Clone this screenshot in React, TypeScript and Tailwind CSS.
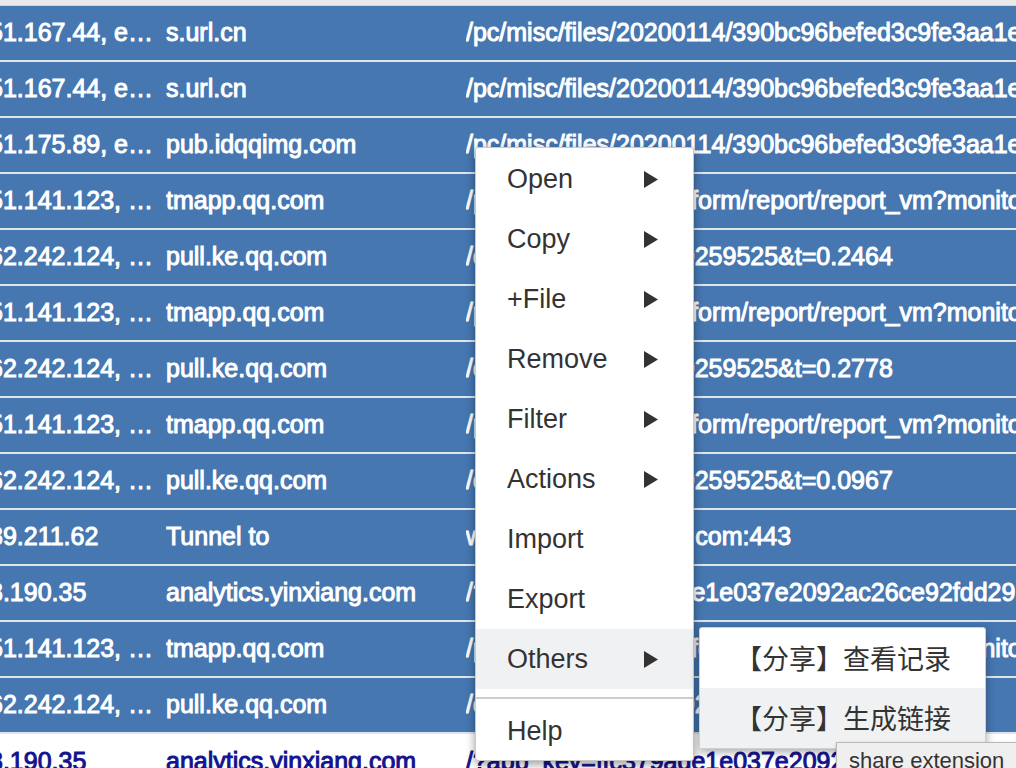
import { Fragment } from "react";

type Row = { ip: string; host: string; path: string; selected?: boolean };

const filesPath = "/pc/misc/files/20200114/390bc96befed3c9fe3aa1e7c2d84f01a.png";
const tmappPath = "/pc/misc/cgi_bin/platform/report/report_vm?monitors=%5B%5D";
const pullPath = (t: string) => `/data?ts=157900000259525&t=${t}`;
const yxPath = "/?app_key=ffc379ade1e037e2092ac26ce92fdd29b8a1";

const rows: Row[] = [
  { ip: "51.167.44, e…", host: "s.url.cn", path: filesPath, selected: true },
  { ip: "51.167.44, e…", host: "s.url.cn", path: filesPath, selected: true },
  { ip: "51.175.89, e…", host: "pub.idqqimg.com", path: filesPath, selected: true },
  { ip: "51.141.123, …", host: "tmapp.qq.com", path: tmappPath, selected: true },
  { ip: "62.242.124, …", host: "pull.ke.qq.com", path: pullPath("0.2464"), selected: true },
  { ip: "51.141.123, …", host: "tmapp.qq.com", path: tmappPath, selected: true },
  { ip: "62.242.124, …", host: "pull.ke.qq.com", path: pullPath("0.2778"), selected: true },
  { ip: "51.141.123, …", host: "tmapp.qq.com", path: tmappPath, selected: true },
  { ip: "62.242.124, …", host: "pull.ke.qq.com", path: pullPath("0.0967"), selected: true },
  { ip: "89.211.62", host: "Tunnel to", path: "wup.imtt.browser.qq.com:443", selected: true },
  { ip: "8.190.35", host: "analytics.yinxiang.com", path: yxPath, selected: true },
  { ip: "51.141.123, …", host: "tmapp.qq.com", path: tmappPath, selected: true },
  { ip: "62.242.124, …", host: "pull.ke.qq.com", path: pullPath("0.1532"), selected: true },
  { ip: "8.190.35", host: "analytics.yinxiang.com", path: yxPath },
];

const menuItems: { label: string; sub?: boolean }[] = [
  { label: "Open", sub: true },
  { label: "Copy", sub: true },
  { label: "+File", sub: true },
  { label: "Remove", sub: true },
  { label: "Filter", sub: true },
  { label: "Actions", sub: true },
  { label: "Import" },
  { label: "Export" },
  { label: "Others", sub: true },
];

function Arrow() {
  return (
    <svg width="14" height="17" viewBox="0 0 14 17" className="shrink-0">
      <path d="M0 0 L14 8.5 L0 17 Z" fill="#333" />
    </svg>
  );
}

export default function App() {
  return (
    <div className="relative h-[768px] w-[1016px] overflow-hidden bg-white font-['Liberation_Sans',Arial,sans-serif]">
      {/* list */}
      <div className="h-[6px] border-b border-[#d6d6d6] bg-[#e9e9e9]" />
      <div className="flex flex-col">
        {rows.map((r, i) => (
          <div
            key={i}
            className={
              r.selected
                ? "flex h-[56px] shrink-0 items-center border-b-2 border-[#dfe4eb] bg-[#4677b1] text-[25px] whitespace-nowrap text-white [-webkit-text-stroke:1px_#fff]"
                : "flex h-[56px] shrink-0 items-center bg-white text-[25px] whitespace-nowrap text-[#13138f] [-webkit-text-stroke:1px_#13138f]"
            }
          >
            <div className="-ml-[11px] w-[177px] shrink-0 overflow-hidden">{r.ip}</div>
            <div className="w-[300px] shrink-0 overflow-hidden">{r.host}</div>
            <div className="min-w-0 flex-1 overflow-hidden">{r.path}</div>
          </div>
        ))}
      </div>

      {/* context menu */}
      <div className="absolute top-[147px] left-[475px] w-[219px] rounded-[3px] border border-[#c9c9c9] bg-white pt-[1px] text-[27px] text-[#333] shadow-[0_3px_10px_rgba(0,0,0,0.4)]">
        {menuItems.map((m) => (
          <Fragment key={m.label}>
            <div
              className={
                m.label === "Others"
                  ? "flex h-[60px] items-center justify-between bg-[#f0f1f3] pr-[35px] pl-[31px]"
                  : "flex h-[60px] items-center justify-between pr-[35px] pl-[31px]"
              }
            >
              <span>{m.label}</span>
              {m.sub && <Arrow />}
            </div>
          </Fragment>
        ))}
        <div className="mt-[8px] h-[2px] bg-[#cdcdcd]" />
        <div className="flex h-[61px] items-center pt-[3px] pl-[31px]">Help</div>
      </div>

      {/* sub menu */}
      <div className="absolute top-[627px] left-[699px] w-[287px] rounded-[3px] border border-[#d0d0d0] bg-white text-[27px] text-[#333] shadow-[0_3px_10px_rgba(0,0,0,0.35)] font-['Noto_Sans_CJK_SC',sans-serif]">
        <div className="flex h-[60px] items-center pl-[35px]">【分享】查看记录</div>
        <div className="flex h-[60px] items-center bg-[#f0f1f3] pl-[35px]">【分享】生成链接</div>
      </div>

      {/* tooltip */}
      <div className="absolute top-[742px] left-[836px] w-[200px] border border-[#b9b9b9] bg-[#efefef] px-[12px] pt-[4px] pb-[8px] text-[22px] leading-[28px] text-[#333] shadow-[0_1px_3px_rgba(0,0,0,0.2)]">
        share extension
      </div>
    </div>
  );
}
